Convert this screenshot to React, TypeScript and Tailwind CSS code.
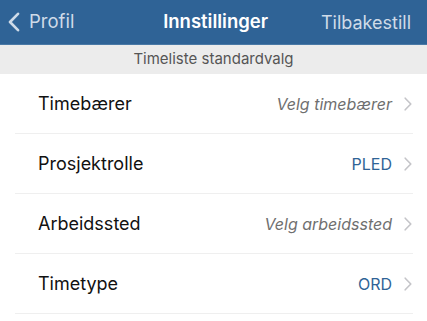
import React from 'react';

type Row = { label: string; value: string; placeholder?: boolean };

const rows: Row[] = [
  { label: 'Timebærer', value: 'Velg timebærer', placeholder: true },
  { label: 'Prosjektrolle', value: 'PLED' },
  { label: 'Arbeidssted', value: 'Velg arbeidssted', placeholder: true },
  { label: 'Timetype', value: 'ORD' },
];

function Chevron({ className }: { className?: string }) {
  return (
    <svg viewBox="0 0 8 14" className={className} fill="none" stroke="currentColor" strokeWidth={1.6} strokeLinecap="round" strokeLinejoin="round">
      <path d="M1.2 1.2 6.8 7l-5.6 5.8" />
    </svg>
  );
}

export default function App() {
  return (
    <div className="w-[427px] h-[321px] overflow-hidden bg-white" style={{ fontFamily: 'Inter, "Liberation Sans", sans-serif' }}>
      <div className="h-[45px] bg-[#2f6396] border-b border-[#4a79a6] flex items-center justify-between pl-2 pr-4 text-[18px]">
        <div className="flex items-center gap-[9px] text-[#cfdbe8]">
          <svg viewBox="0 0 12 20" className="w-[12px] h-[20px]" fill="none" stroke="currentColor" strokeWidth={2.6} strokeLinecap="round" strokeLinejoin="round">
            <path d="M10 1.8 2 10l8 8.2" />
          </svg>
          <span className="text-[18.5px]">Profil</span>
        </div>
        <span className="text-white font-semibold text-[18.5px] ml-[36px]">Innstillinger</span>
        <span className="text-[#cfdbe8]">Tilbakestill</span>
      </div>
      <div className="h-[29px] bg-[#ececec] flex items-center justify-center text-[15px] text-[#555]">
        Timeliste standardvalg
      </div>
      <div className="ml-[15px] mr-[14px]">
        {rows.map((r) => (
          <div key={r.label} className="h-[60px] border-b border-[#efefef] flex items-center pl-[23px] pr-[1px]">
            <span className="flex-1 text-[18px] text-[#111]">{r.label}</span>
            <span className={r.placeholder ? 'italic text-[16px] text-[#6f6f6f]' : 'text-[16px] text-[#2f6396]'}>{r.value}</span>
            <Chevron className="w-[8px] h-[14px] ml-[12px] text-[#c4c4c8]" />
          </div>
        ))}
      </div>
    </div>
  );
}
